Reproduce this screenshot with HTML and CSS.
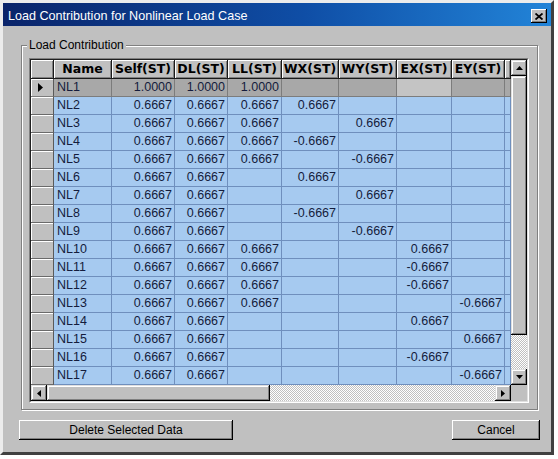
FILE: index.html
```html
<!DOCTYPE html>
<html>
<head>
<meta charset="utf-8">
<link rel="stylesheet" href="styles.css">
</head>
<body>
<div class="window">
  <div class="titlebar">
    <span class="title">Load Contribution for Nonlinear Load Case</span>
    <span class="close"><svg width="8" height="7" viewBox="0 0 8 7"><path d="M0.5 0.5 L7.5 6.5 M7.5 0.5 L0.5 6.5" stroke="#000" stroke-width="1.8"/></svg></span>
  </div>
  <div class="client">
    <div class="group">
      <span class="group-label">Load Contribution</span>
      <div class="frame">
        <div class="frame-inner">
          <div class="top">
            <div class="table">
              <div class="row head"><span></span><span>Name</span><span>Self(ST)</span><span>DL(ST)</span><span>LL(ST)</span><span>WX(ST)</span><span>WY(ST)</span><span>EX(ST)</span><span>EY(ST)</span><span></span></div>
              <div class="row sel"><span class="rh"><svg width="5" height="9" viewBox="0 0 5 9"><polygon points="0,0 5,4.5 0,9" fill="#000"/></svg></span><span>NL1</span><span class="n">1.0000</span><span class="n">1.0000</span><span class="n">1.0000</span><span></span><span></span><span class="lt"></span><span></span><span></span></div>
              <div class="row"><span class="rh"></span><span>NL2</span><span class="n">0.6667</span><span class="n">0.6667</span><span class="n">0.6667</span><span class="n">0.6667</span><span></span><span></span><span></span><span></span></div>
              <div class="row"><span class="rh"></span><span>NL3</span><span class="n">0.6667</span><span class="n">0.6667</span><span class="n">0.6667</span><span></span><span class="n">0.6667</span><span></span><span></span><span></span></div>
              <div class="row"><span class="rh"></span><span>NL4</span><span class="n">0.6667</span><span class="n">0.6667</span><span class="n">0.6667</span><span class="n">-0.6667</span><span></span><span></span><span></span><span></span></div>
              <div class="row"><span class="rh"></span><span>NL5</span><span class="n">0.6667</span><span class="n">0.6667</span><span class="n">0.6667</span><span></span><span class="n">-0.6667</span><span></span><span></span><span></span></div>
              <div class="row"><span class="rh"></span><span>NL6</span><span class="n">0.6667</span><span class="n">0.6667</span><span></span><span class="n">0.6667</span><span></span><span></span><span></span><span></span></div>
              <div class="row"><span class="rh"></span><span>NL7</span><span class="n">0.6667</span><span class="n">0.6667</span><span></span><span></span><span class="n">0.6667</span><span></span><span></span><span></span></div>
              <div class="row"><span class="rh"></span><span>NL8</span><span class="n">0.6667</span><span class="n">0.6667</span><span></span><span class="n">-0.6667</span><span></span><span></span><span></span><span></span></div>
              <div class="row"><span class="rh"></span><span>NL9</span><span class="n">0.6667</span><span class="n">0.6667</span><span></span><span></span><span class="n">-0.6667</span><span></span><span></span><span></span></div>
              <div class="row"><span class="rh"></span><span>NL10</span><span class="n">0.6667</span><span class="n">0.6667</span><span class="n">0.6667</span><span></span><span></span><span class="n">0.6667</span><span></span><span></span></div>
              <div class="row"><span class="rh"></span><span>NL11</span><span class="n">0.6667</span><span class="n">0.6667</span><span class="n">0.6667</span><span></span><span></span><span class="n">-0.6667</span><span></span><span></span></div>
              <div class="row"><span class="rh"></span><span>NL12</span><span class="n">0.6667</span><span class="n">0.6667</span><span class="n">0.6667</span><span></span><span></span><span class="n">-0.6667</span><span></span><span></span></div>
              <div class="row"><span class="rh"></span><span>NL13</span><span class="n">0.6667</span><span class="n">0.6667</span><span class="n">0.6667</span><span></span><span></span><span></span><span class="n">-0.6667</span><span></span></div>
              <div class="row"><span class="rh"></span><span>NL14</span><span class="n">0.6667</span><span class="n">0.6667</span><span></span><span></span><span></span><span class="n">0.6667</span><span></span><span></span></div>
              <div class="row"><span class="rh"></span><span>NL15</span><span class="n">0.6667</span><span class="n">0.6667</span><span></span><span></span><span></span><span></span><span class="n">0.6667</span><span></span></div>
              <div class="row"><span class="rh"></span><span>NL16</span><span class="n">0.6667</span><span class="n">0.6667</span><span></span><span></span><span></span><span class="n">-0.6667</span><span></span><span></span></div>
              <div class="row"><span class="rh"></span><span>NL17</span><span class="n">0.6667</span><span class="n">0.6667</span><span></span><span></span><span></span><span></span><span class="n">-0.6667</span><span></span></div>
            </div>
            <div class="vscroll">
              <span class="sb-btn"><svg width="7" height="4" viewBox="0 0 7 4"><polygon points="0,4 3.5,0 7,4" fill="#000"/></svg></span>
              <span class="thumb v-thumb"></span>
              <span class="track"></span>
              <span class="sb-btn"><svg width="7" height="4" viewBox="0 0 7 4"><polygon points="0,0 3.5,4 7,0" fill="#000"/></svg></span>
            </div>
          </div>
          <div class="bottom">
            <div class="hscroll">
              <span class="sb-btn"><svg width="4" height="7" viewBox="0 0 4 7"><polygon points="4,0 0,3.5 4,7" fill="#000"/></svg></span>
              <span class="thumb h-thumb"></span>
              <span class="track"></span>
              <span class="sb-btn"><svg width="4" height="7" viewBox="0 0 4 7"><polygon points="0,0 4,3.5 0,7" fill="#000"/></svg></span>
            </div>
            <div class="corner"></div>
          </div>
        </div>
      </div>
    </div>
    <div class="buttons">
      <button class="btn btn-delete">Delete Selected Data</button>
      <button class="btn btn-cancel">Cancel</button>
    </div>
  </div>
</div>
</body>
</html>
```
FILE: styles.css
```css
body {
  margin: 0;
  background: #ffffff;
  font-family: "Liberation Sans", Arial, sans-serif;
}
.window {
  width: 554px;
  height: 455px;
  box-sizing: border-box;
  background: #c0c0c0;
  border: 3px solid;
  border-color: #ececec #404040 #404040 #ececec;
  display: flex;
  flex-direction: column;
}
.titlebar {
  height: 23px;
  flex: none;
  background: linear-gradient(90deg, #0a246a 0%, #0f4ea6 55%, #2284d8 100%);
  display: flex;
  align-items: center;
  padding: 0 4px 0 5px;
}
.title {
  flex: 1;
  color: #ffffff;
  font-size: 12.6px;
  line-height: 15px;
  padding-top: 3px;
}
.close {
  width: 16px;
  height: 14px;
  margin-top: 3px;
  background: #c0c0c0;
  box-shadow: inset -1px -1px #000, inset 1px 1px #fff, inset -2px -2px #808080;
  display: flex;
  align-items: center;
  justify-content: center;
}
.client {
  flex: 1;
  padding: 19px 13px 0 18px;
}
.group {
  position: relative;
  border: 1px solid #808080;
  box-shadow: inset 1px 1px #fff, 1px 1px #fff;
  padding: 12px 8px 6px 7px;
}
.group-label {
  position: absolute;
  left: 5px;
  top: -8px;
  background: #c0c0c0;
  padding: 0 2px;
  font-size: 12px;
  line-height: 14px;
  color: #000;
}
.frame {
  width: 500px;
  height: 345px;
  box-sizing: border-box;
  border: 1px solid;
  border-color: #808080 #ffffff #ffffff #808080;
}
.frame-inner {
  height: 100%;
  box-sizing: border-box;
  border: 1px solid;
  border-color: #202020 #dfdfdf #dfdfdf #202020;
  display: flex;
  flex-direction: column;
}
.top {
  display: flex;
  height: 325px;
}
.table {
  width: 480px;
  overflow: hidden;
  background: #a6caf0;
}
.row {
  display: grid;
  grid-template-columns: 23px 58px 63px 53px 54px 57px 58px 55px 53px 6px;
  height: 18px;
  background: #a6caf0;
  color: #141c3c;
  font-size: 12.5px;
}
.row > span {
  box-sizing: border-box;
  border-right: 1px solid #6f8fbd;
  border-bottom: 1px solid #6f8fbd;
  line-height: 17px;
  padding-left: 3px;
  white-space: nowrap;
  overflow: hidden;
}
.row > span.n {
  text-align: right;
  padding-left: 0;
  padding-right: 2px;
}
.row > span.rh {
  background: #c0c0c0;
  border-right: 1px solid #5a5a5a;
  border-bottom: 1px solid #6a6a6a;
  box-shadow: inset 1px 1px #fff;
  display: flex;
  align-items: center;
  padding-left: 7px;
}
.row.sel {
  background: #a8a8a8;
}
.row.sel > span {
  border-color: #7c7c7c;
}
.row.sel > span.rh {
  border-right-color: #5a5a5a;
}
.row.sel > span.lt {
  background: #c4c4c4;
}
.row.head {
  height: 19px;
  background: #c0c0c0;
  color: #000;
  font-family: "DejaVu Sans", sans-serif;
  font-weight: bold;
  font-size: 12.5px;
}
.row.head > span {
  border-right: 1px solid #1a1a1a;
  border-bottom: 1px solid #1a1a1a;
  box-shadow: inset 1px 1px #fff, inset -1px -1px #808080;
  text-align: center;
  padding: 0;
  line-height: 18px;
}
.vscroll {
  width: 16px;
  display: flex;
  flex-direction: column;
}
.bottom {
  display: flex;
  height: 16px;
}
.hscroll {
  width: 480px;
  display: flex;
}
.corner {
  width: 16px;
  background: #c0c0c0;
}
.sb-btn, .thumb {
  flex: none;
  width: 16px;
  height: 16px;
  box-sizing: border-box;
  background: #c0c0c0;
  box-shadow: inset -1px -1px #000, inset 1px 1px #dfdfdf, inset -2px -2px #808080, inset 2px 2px #fff;
  display: flex;
  align-items: center;
  justify-content: center;
}
.v-thumb {
  height: 259px;
}
.h-thumb {
  width: 223px;
}
.track {
  flex: 1;
  background-color: #ffffff;
  background-image: conic-gradient(#c0c0c0 25%, #ffffff 0 50%, #c0c0c0 0 75%, #ffffff 0);
  background-size: 2px 2px;
}
.buttons {
  display: flex;
  justify-content: space-between;
  margin: 10px -2px 0 -2px;
}
.btn {
  height: 20px;
  border: none;
  padding: 0;
  margin: 0;
  background: #c0c0c0;
  box-shadow: inset -1px -1px #000, inset 1px 1px #fff, inset -2px -2px #808080;
  font-family: "Liberation Sans", Arial, sans-serif;
  font-size: 12px;
  color: #000;
}
.btn-delete {
  width: 214px;
}
.btn-cancel {
  width: 88px;
}
```
